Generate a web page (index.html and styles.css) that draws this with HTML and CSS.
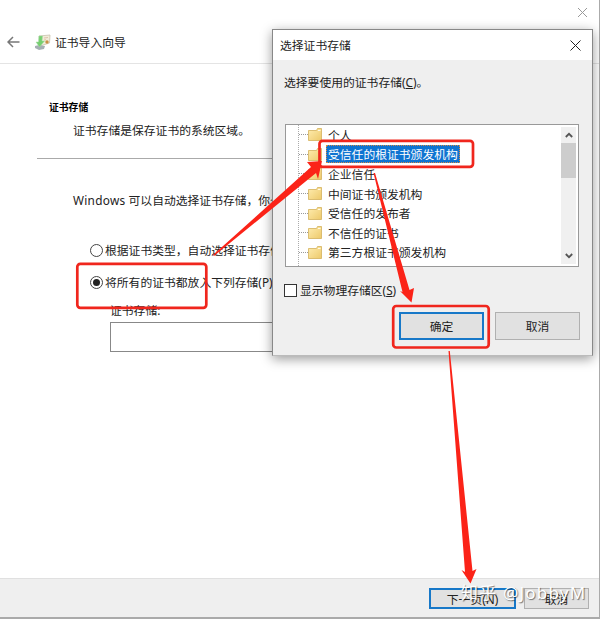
FILE: index.html
```html
<!DOCTYPE html>
<html lang="zh-CN">
<head>
    <meta charset="UTF-8">
    <title>证书导入向导</title>
    <link rel="stylesheet" href="styles.css">
</head>
<body>
    <div class="wizard">
        <div class="titlebar">
            <svg class="close" width="11" height="11" viewBox="0 0 11 11"><path d="M1 1l9 9M10 1l-9 9" stroke="#999" fill="none"/></svg>
        </div>
        <div class="header">
            <svg width="13" height="12" viewBox="0 0 13 12"><path d="M6 1L1 6l5 5M1 6h11.5" stroke="#777" stroke-width="1.5" fill="none"/></svg>
            <svg class="cert-icon" width="17" height="17" viewBox="0 0 17 17">
                <path d="M5 2l11-1-.5 8-9.500 3z" fill="#f1ecd9" stroke="#c9c3ad" stroke-width=".8"/>
                <path d="M10 4l4-.5M10 6l2-.3" stroke="#d9b7a0" stroke-width=".8"/>
                <path d="M1 12l4-1 6 1-1 3-5 1-4-2z" fill="#a5afb3"/>
                <path d="M5 2l3.500 0-.5 5h2.500l-5 6-3.500-5h2.500z" fill="#76cf70" stroke="#a3dba0" stroke-width=".5"/>
                <circle cx="13" cy="8" r="1.7" fill="#c98f45"/>
            </svg>
            <h1>证书导入向导</h1>
        </div>

        <div class="content">
            <h2>证书存储</h2>
            <p class="subtitle">证书存储是保存证书的系统区域。</p>
            <hr>
            <div class="options">
                <p><span class="latin">Windows</span> 可以自动选择证书存储，你也可以为证书指定一个位置。</p>
                <div class="radio first"><span class="dot"></span>根据证书类型，自动选择证书存储(U)</div>
                <div class="radio"><span class="dot checked"></span>将所有的证书都放入下列存储(P)</div>
                <div class="store">
                    <label>证书存储:</label>
                    <div class="field"></div>
                </div>
            </div>
        </div>

        <div class="footer">
            <div class="btn primary">下一页(N)</div>
            <div class="btn cancel">取消</div>
        </div>
    </div>

    <!-- Store picker -->
    <div class="dialog">
        <div class="dialog-title">
            <span>选择证书存储</span>
            <svg width="11" height="11" viewBox="0 0 11 11"><path d="M.5 .5l10 10M10.5 .5l-10 10" stroke="#222" fill="none"/></svg>
        </div>
        <div class="dialog-body">
            <p>选择要使用的证书存储(<u>C</u>)。</p>
            <div class="tree">
                <ul>
                    <li><i></i><svg class="folder"><use href="#folder"/></svg><span>个人</span></li>
                    <li><i></i><svg class="folder"><use href="#folder"/></svg><span class="selected">受信任的根证书颁发机构</span></li>
                    <li><i></i><svg class="folder"><use href="#folder"/></svg><span>企业信任</span></li>
                    <li><i></i><svg class="folder"><use href="#folder"/></svg><span>中间证书颁发机构</span></li>
                    <li><i></i><svg class="folder"><use href="#folder"/></svg><span>受信任的发布者</span></li>
                    <li><i></i><svg class="folder"><use href="#folder"/></svg><span>不信任的证书</span></li>
                    <li><i></i><svg class="folder"><use href="#folder"/></svg><span>第三方根证书颁发机构</span></li>
                </ul>
                <div class="scrollbar">
                    <svg width="8" height="6" viewBox="0 0 8 6"><path d="M.8 5L4 1.8 7.2 5" stroke="#555" stroke-width="1.8" fill="none"/></svg>
                    <div class="thumb"></div>
                    <svg width="8" height="6" viewBox="0 0 8 6"><path d="M.8 1L4 4.2 7.2 1" stroke="#555" stroke-width="1.8" fill="none"/></svg>
                </div>
            </div>
            <div class="check"><span class="box"></span>显示物理存储区(<u>S</u>)</div>
            <div class="actions">
                <div class="btn primary">确定</div>
                <div class="btn">取消</div>
            </div>
        </div>
    </div>

    <!-- Red boxes and arrows -->
    <svg class="marks" width="600" height="620" viewBox="0 0 600 620">
        <defs>
            <linearGradient id="gold" x1="0" y1="0" x2="1" y2="1">
                <stop offset="0" stop-color="#ffedb0"/>
                <stop offset="1" stop-color="#edc96a"/>
            </linearGradient>
            <symbol id="folder" viewBox="0 0 14 13">
                <path d="M.5 2.5h8l1-2h4v12H.5z" fill="url(#gold)" stroke="#d3b15c" stroke-width=".8"/>
                <path d="M10 2.5h2.5" stroke="#fffbe8"/>
            </symbol>
        </defs>
        <g fill="none" stroke="#f0261d" stroke-width="2.7">
            <rect x="77.3" y="263.8" width="129" height="44" rx="3"/>
            <rect x="319.5" y="140.8" width="153.5" height="26" rx="3"/>
            <rect x="393.2" y="306" width="95.5" height="41.5" rx="3"/>
        </g>
        <g fill="#fb2318">
            <path d="M213 255L311 167 307 162 322 161 318 179 316 173 214 256z"/>
            <path d="M373.500 173L402.500 292 400 291 411.500 302.500 414 288 409.500 290 375 173z"/>
            <path d="M448.500 351L465 572 461.500 570 470.500 583.500 476.500 569 472.500 571 449.800 351z"/>
        </g>
    </svg>
    <div class="watermark">知乎 @JobbyM</div>
</body>
</html>
```
FILE: styles.css
```css
* {
    box-sizing: border-box;
}

body {
    margin: 0;
    width: 600px;
    height: 620px;
    position: relative;
    overflow: hidden;
    font-family: "Noto Sans", "Noto Sans CJK SC", sans-serif;
    font-size: 11.8px;
    line-height: 16px;
    color: #222;
    background: #fff;
}

h1, h2, p, ul {
    margin: 0;
    padding: 0;
}

.wizard {
    height: 619px;
    display: flex;
    flex-direction: column;
    border-right: 1px solid #aaa;
    border-bottom: 2px solid #aaa;
    white-space: nowrap;
    overflow: hidden;
}

.titlebar {
    height: 24px;
    padding: 7px 11px 0 0;
    display: flex;
    justify-content: flex-end;
}

.header {
    height: 40px;
    padding: 0 8px 3px 7px;
    display: flex;
    align-items: center;
    border-bottom: 1px solid #e4e4e4;
}

.cert-icon {
    margin: 0 4px 0 14px;
}

h1 {
    font-size: 11.8px;
    font-weight: normal;
}

.content {
    flex: 1;
    padding: 36px 0 0 37px;
}

h2 {
    margin-left: 12px;
    font-size: 9.8px;
    line-height: 16px;
    color: #000;
}

.subtitle {
    margin: 6px 0 0 36px;
}

hr {
    width: 240px;
    margin: 20px 0 0;
    border: 0;
    border-top: 1px solid #aaa;
}

.options {
    padding: 33px 0 0 36px;
}

.latin {
    letter-spacing: 0.3px;
}

.radio {
    display: flex;
    align-items: center;
    margin: 16px 0 0 17px;
}

.radio.first {
    margin-top: 34px;
}

.dot {
    width: 13px;
    height: 13px;
    margin-right: 2px;
    border: 1px solid #444;
    border-radius: 50%;
    display: grid;
    place-items: center;
}

.dot.checked::after {
    content: "";
    width: 7px;
    height: 7px;
    border-radius: 50%;
    background: #222;
}

.store {
    margin: 12px 0 0 37px;
}

.store label {
    display: block;
}

.field {
    width: 400px;
    height: 30px;
    margin-top: 4px;
    border: 1px solid #888;
}

.footer {
    height: 39px;
    padding: 9px 10px 0 0;
    display: flex;
    justify-content: flex-end;
    gap: 8px;
    background: #efefef;
    border-top: 1px solid #e0e0e0;
}

.btn {
    width: 85px;
    height: 28px;
    display: flex;
    align-items: center;
    justify-content: center;
    background: #e1e1e1;
    border: 1px solid #b0b0b0;
}

.btn.primary {
    border: 2px solid #1778c8;
}

.footer .btn {
    height: 21px;
    width: 65px;
}

.footer .btn.primary {
    width: 87px;
}

.dialog {
    position: absolute;
    left: 272px;
    top: 29px;
    width: 321px;
    height: 327px;
    background: #efefef;
    border: 1px solid #888;
    border-bottom-color: #bbb;
    box-shadow: 0 3px 11px rgba(0, 0, 0, 0.4);
    white-space: nowrap;
}

.dialog-title {
    height: 30px;
    padding: 0 11px 0 7px;
    display: flex;
    align-items: center;
    justify-content: space-between;
    background: #fff;
}

.dialog-body {
    padding: 14px 13px 0 12px;
}

.dialog-body > p {
    margin-left: -1px;
}

.tree {
    height: 143px;
    margin-top: 34px;
    display: flex;
    justify-content: space-between;
    border: 1px solid #999;
    background: #fff;
    overflow: hidden;
}

.tree ul {
    margin: 0 0 0 12px;
    list-style: none;
    border-left: 1px dotted #aaa;
}

.tree li {
    height: 19.6px;
    display: flex;
    align-items: center;
}

.tree i {
    width: 9px;
    border-top: 1px dotted #999;
}

.folder {
    width: 14px;
    height: 13px;
    margin-right: 4px;
}

.tree span {
    padding: 0 2px;
    line-height: 18px;
}

.tree .selected {
    color: #fff;
    background: #0f74d1;
    outline: 1px dotted #d98a42;
    outline-offset: -1px;
}

.scrollbar {
    width: 15px;
    margin: 2px 2px 2px 0;
    padding: 5px 0;
    display: flex;
    flex-direction: column;
    align-items: center;
    background: #f0f0f0;
}

.thumb {
    width: 15px;
    height: 35px;
    margin: 5px 0 auto;
    background: #cdcdcd;
}

.check {
    margin: 15px 0 0 -1px;
    display: flex;
    align-items: center;
}

.box {
    width: 13px;
    height: 13px;
    margin-right: 3px;
    background: #fff;
    border: 1px solid #333;
}

.actions {
    margin: 14px -1px 0 0;
    display: flex;
    justify-content: flex-end;
    gap: 11px;
}

.marks {
    position: absolute;
    left: 0;
    top: 0;
}

.watermark {
    position: absolute;
    left: 461px;
    top: 581px;
    font-size: 17px;
    line-height: 24px;
    letter-spacing: 1.2px;
    color: #fff;
    text-shadow: 1px 1px 1px rgba(0, 0, 0, 0.5);
    white-space: nowrap;
}
```
